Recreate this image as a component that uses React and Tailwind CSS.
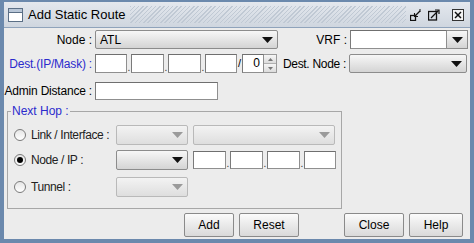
import React from 'react';

const font = { fontFamily: '"Liberation Sans", Arial, sans-serif' };

const Arrow = ({ disabled }) => (
    <svg width="11" height="6" viewBox="0 0 11 6">
        <polygon points="0,0 11,0 5.5,6" fill={disabled ? '#9a9a9a' : '#111'} />
    </svg>
);

const Combo = ({ w, h = 19, value, disabled }) => (
    <div
        className={`flex items-center shrink-0 rounded-[2px] border ${disabled ? 'border-[#b9b9b9] bg-gradient-to-b from-[#f3f3f3] to-[#dedede]' : 'border-[#8c8c8c] bg-gradient-to-b from-[#f7f7f7] to-[#d4d4d4]'}`}
        style={{ width: w, height: h }}
    >
        <span className="flex-1 pl-[4px] text-[12px] text-black">{value}</span>
        <span className="w-[20px] flex items-center justify-center">
            <Arrow disabled={disabled} />
        </span>
    </div>
);

const Field = ({ w, h = 19, children, className = '' }) => (
    <div
        className={`shrink-0 bg-white border border-[#8f8f8f] border-t-[#6f6f6f] border-l-[#7a7a7a] text-[12px] ${className}`}
        style={{ width: w, height: h }}
    >
        {children}
    </div>
);

const Dot = ({ w = 4 }) => (
    <span className="shrink-0 flex items-end justify-center text-[10px] leading-[10px] text-[#333]" style={{ width: w }}>
        .
    </span>
);

const Btn = ({ w, children }) => (
    <button
        className="h-[24px] shrink-0 rounded-[2px] border border-[#8a8a8a] bg-gradient-to-b from-[#fbfbfb] to-[#d9d9d9] text-[12px] text-black"
        style={{ width: w }}
    >
        {children}
    </button>
);

const Radio = ({ checked }) => (
    <span className="w-[12px] h-[12px] shrink-0 rounded-full border border-[#7a7a7a] bg-gradient-to-b from-[#e6e6e6] to-white flex items-center justify-center">
        {checked && <span className="w-[6px] h-[6px] rounded-full bg-black" />}
    </span>
);

const TitleIcon = () => (
    <svg width="15" height="14" viewBox="0 0 15 14">
        <rect x="0.5" y="0.5" width="14" height="13" fill="#fff" stroke="#5b6f86" />
        <rect x="1" y="1" width="13" height="3" fill="#b9c7d8" />
        <line x1="1" y1="4.5" x2="14" y2="4.5" stroke="#5b6f86" />
    </svg>
);

const Restore = () => (
    <svg width="12" height="12" viewBox="0 0 12 12">
        <rect x="0.5" y="6.5" width="5" height="5" fill="none" stroke="#111" strokeWidth="1.3" />
        <line x1="5" y1="7" x2="10" y2="2" stroke="#111" strokeWidth="1.3" />
        <polyline points="4.5,4 4.5,7.5 8,7.5" fill="none" stroke="#111" strokeWidth="1.1" />
        <line x1="10" y1="0" x2="10" y2="3" stroke="#111" />
    </svg>
);

const Maximize = () => (
    <svg width="12" height="12" viewBox="0 0 12 12">
        <rect x="0.5" y="2.5" width="8" height="8.5" fill="none" stroke="#111" strokeWidth="1.3" />
        <line x1="3" y1="9" x2="10.5" y2="1.5" stroke="#111" strokeWidth="1.3" />
        <polyline points="7,1 11,1 11,5" fill="none" stroke="#111" strokeWidth="1.2" />
    </svg>
);

const CloseIcon = () => (
    <svg width="12" height="12" viewBox="0 0 12 12">
        <rect x="0.5" y="0.5" width="11" height="11" fill="#f2f2f2" stroke="#333" />
        <line x1="3" y1="3" x2="9" y2="9" stroke="#111" strokeWidth="1.5" />
        <line x1="9" y1="3" x2="3" y2="9" stroke="#111" strokeWidth="1.5" />
    </svg>
);

const IpFields = ({ widths, h }) => (
    <div className="flex">
        {widths.map((w, i) => (
            <React.Fragment key={i}>
                {i > 0 && <Dot />}
                <Field w={w} h={h} />
            </React.Fragment>
        ))}
    </div>
);

const HopLabel = ({ checked, children }) => (
    <span className="w-[108px] shrink-0 flex items-center pl-[6px] gap-[5px] text-[#222] whitespace-nowrap tracking-[-0.4px]">
        <Radio checked={checked} />
        <span>{children}</span>
    </span>
);

export default function App() {
    return (
        <div className="w-[474px] h-[243px] bg-[#6b89ad] pt-[2px] px-[4px] pb-[4px] flex flex-col" style={font}>
            {/* title bar */}
            <div className="h-[25px] shrink-0 flex items-center bg-gradient-to-b from-[#e4e8ee] to-[#cfd6df] pl-[4px] pr-[6px]">
                <TitleIcon />
                <span className="ml-[5px] text-[13px] text-black whitespace-nowrap">Add Static Route</span>
                <div className="flex-1 h-[17px] mx-[4px] bg-[repeating-linear-gradient(135deg,#c0c9d4_0px,#c0c9d4_1px,transparent_1px,transparent_3px)]" />
                <div className="flex items-center gap-[6px]">
                    <Restore />
                    <Maximize />
                    <span className="ml-[6px]"><CloseIcon /></span>
                </div>
            </div>

            {/* content */}
            <div className="flex-1 bg-[#ececec] border-t border-[#8fa3bb] flex flex-col text-[12px] text-black">
                <div className="flex items-center mt-[2px] h-[19px] whitespace-nowrap">
                    <span className="w-[91px] shrink-0 text-right pr-[3px]">Node :</span>
                    <Combo w={183} value="ATL" />
                    <span className="w-[72px] shrink-0 text-right pr-[3px]">VRF :</span>
                    <div className="flex h-[19px]">
                        <Field w={97} h={19} />
                        <div className="w-[21px] h-[19px] border border-[#8c8c8c] border-l-0 bg-gradient-to-b from-[#f7f7f7] to-[#d4d4d4] flex items-center justify-center">
                            <Arrow />
                        </div>
                    </div>
                </div>

                <div className="flex items-center mt-[5px] h-[19px] whitespace-nowrap">
                    <span className="w-[91px] shrink-0 text-right pr-[3px] text-[#2b2bcc] tracking-[-0.2px]">Dest.(IP/Mask) :</span>
                    <IpFields widths={[32, 33, 33, 32]} h={19} />
                    <span className="w-[5px] shrink-0 text-center text-[11px]">/</span>
                    <Field w={22} h={19} className="text-right pr-[3px] leading-[17px]">0</Field>
                    <div className="w-[13px] h-[19px] shrink-0 flex flex-col border border-[#9a9a9a] border-l-0">
                        <div className="flex-1 bg-gradient-to-b from-[#f6f6f6] to-[#dcdcdc] flex items-center justify-center border-b border-[#b0b0b0]">
                            <svg width="5" height="3" viewBox="0 0 5 3"><polygon points="0,3 5,3 2.5,0" fill="#777" /></svg>
                        </div>
                        <div className="flex-1 bg-gradient-to-b from-[#f6f6f6] to-[#dcdcdc] flex items-center justify-center">
                            <svg width="5" height="3" viewBox="0 0 5 3"><polygon points="0,0 5,0 2.5,3" fill="#777" /></svg>
                        </div>
                    </div>
                    <span className="w-[72px] shrink-0 text-right pr-[3px] tracking-[-0.3px]">Dest. Node :</span>
                    <Combo w={118} />
                </div>

                <div className="flex items-center mt-[9px] h-[18px] whitespace-nowrap">
                    <span className="w-[91px] shrink-0 text-right pr-[3px] tracking-[-0.2px]">Admin Distance :</span>
                    <Field w={123} h={18} />
                </div>

                <fieldset className="ml-[3px] w-[335px] mt-[4px] border border-[#a7a7a7] pb-[11px]">
                    <legend className="ml-[3px] px-[1px] text-[12px] leading-[14px] text-[#2b2bcc]">Next Hop :</legend>
                    <div className="flex items-center mt-[7px] h-[20px]">
                        <HopLabel>Link / Interface :</HopLabel>
                        <Combo w={72} h={20} disabled />
                        <span className="w-[5px]" />
                        <Combo w={142} h={20} disabled />
                    </div>
                    <div className="flex items-center mt-[5px] h-[20px]">
                        <HopLabel checked>Node / IP :</HopLabel>
                        <Combo w={72} h={20} />
                        <span className="w-[5px]" />
                        <IpFields widths={[33, 33, 33, 32]} h={18} />
                    </div>
                    <div className="flex items-center mt-[7px] h-[20px]">
                        <HopLabel>Tunnel :</HopLabel>
                        <Combo w={72} h={20} disabled />
                    </div>
                </fieldset>

                <div className="flex items-center mt-[4px] pl-[180px]">
                    <Btn w={50}>Add</Btn>
                    <span className="w-[5px]" />
                    <Btn w={60}>Reset</Btn>
                    <span className="w-[45px]" />
                    <Btn w={60}>Close</Btn>
                    <span className="w-[5px]" />
                    <Btn w={54}>Help</Btn>
                </div>
            </div>
        </div>
    );
}
